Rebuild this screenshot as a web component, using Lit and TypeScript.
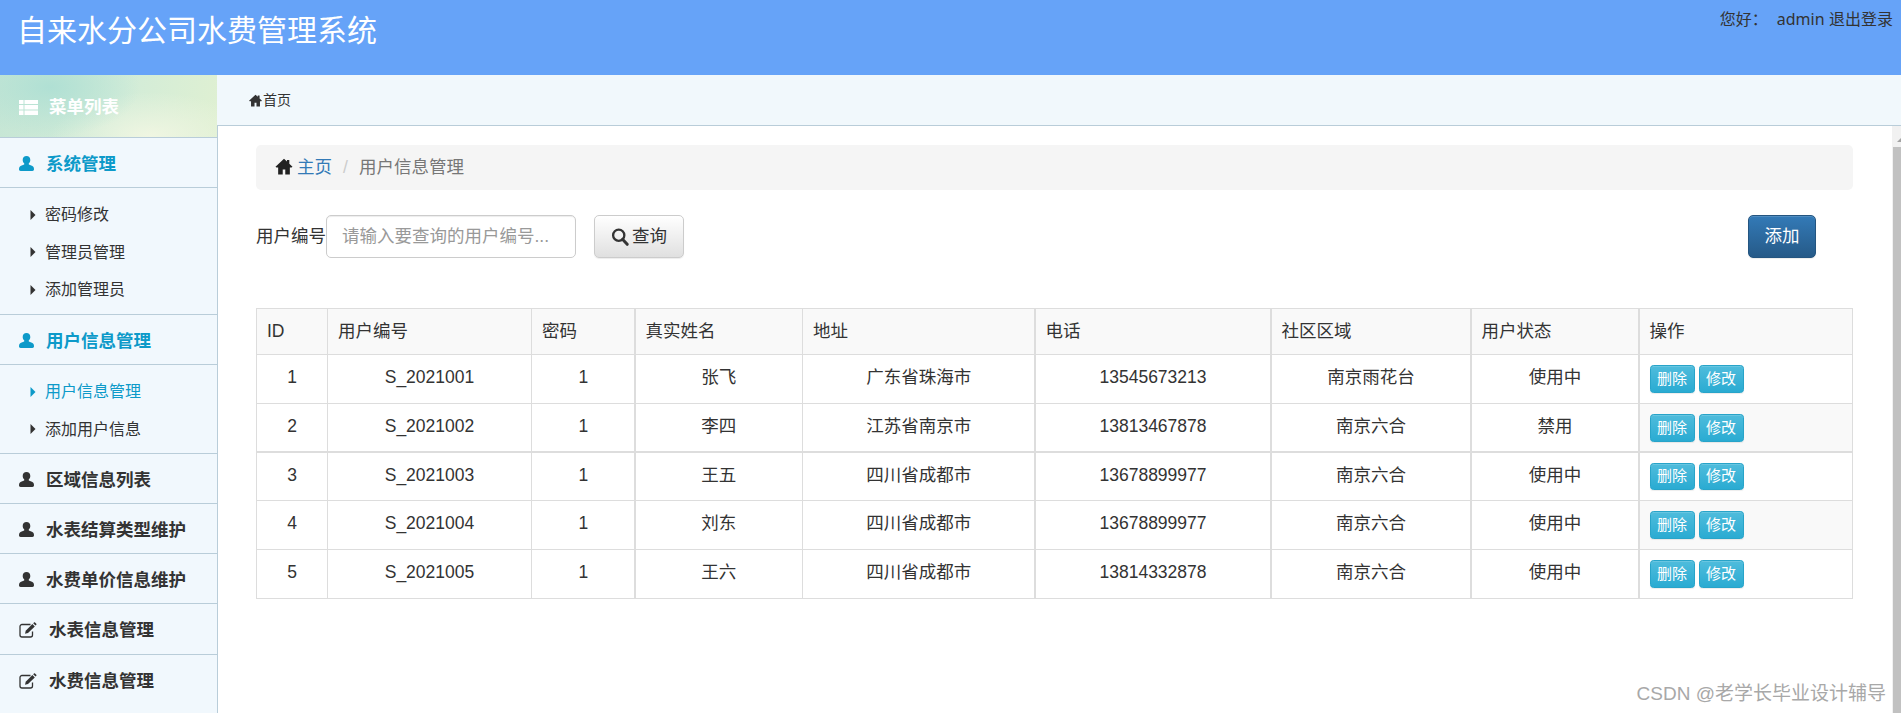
import { LitElement, html, css, svg } from 'lit';
import { customElement } from 'lit/decorators.js';
import { classMap } from 'lit/directives/class-map.js';

interface UserRow {
  id: number;
  code: string;
  pwd: string;
  name: string;
  addr: string;
  phone: string;
  area: string;
  status: string;
}

const rows: UserRow[] = [
  { id: 1, code: 'S_2021001', pwd: '1', name: '张飞', addr: '广东省珠海市', phone: '13545673213', area: '南京雨花台', status: '使用中' },
  { id: 2, code: 'S_2021002', pwd: '1', name: '李四', addr: '江苏省南京市', phone: '13813467878', area: '南京六合', status: '禁用' },
  { id: 3, code: 'S_2021003', pwd: '1', name: '王五', addr: '四川省成都市', phone: '13678899977', area: '南京六合', status: '使用中' },
  { id: 4, code: 'S_2021004', pwd: '1', name: '刘东', addr: '四川省成都市', phone: '13678899977', area: '南京六合', status: '使用中' },
  { id: 5, code: 'S_2021005', pwd: '1', name: '王六', addr: '四川省成都市', phone: '13814332878', area: '南京六合', status: '使用中' },
];

const heads = ['ID', '用户编号', '密码', '真实姓名', '地址', '电话', '社区区域', '用户状态', '操作'];

const userIcon = html`<svg class="ico-user" viewBox="0 0 15 15" fill="currentColor">${svg`<path d="M7.500 0C5.200 0 3.700 1.700 3.700 3.900c0 1.500.6 2.700 1.500 3.400v1.200C3.700 9.200 1.600 9.700.7 10.800.2 11.400 0 12.300 0 13.300 0 14.400.6 15 1.600 15h11.800c1 0 1.600-.6 1.600-1.700 0-1-.2-1.900-.7-2.500-.9-1.100-3-1.600-4.500-2.300V7.300c.9-.7 1.500-1.900 1.500-3.400C11.300 1.700 9.800 0 7.500 0z"/>`}</svg>`;

const editIcon = html`<svg class="ico-edit" viewBox="0 0 18 16">${svg`<path d="M11.500 2.500H3C1.900 2.500 1 3.400 1 4.500v8.500c0 1.100.9 2 2 2h8.500c1.100 0 2-.9 2-2V9.500" fill="none" stroke="currentColor" stroke-width="1.300"/><path d="M6 11.800l.7-3L13.400 2l2.400 2.400-6.800 6.700z" fill="currentColor"/><path d="M14.200 1.200l.8-.8c.3-.3.7-.3 1 0l1.300 1.300c.3.300.3.700 0 1l-.8.800z" fill="currentColor"/>`}</svg>`;

const caretIcon = html`<svg class="ico-caret" viewBox="0 0 6 10" fill="currentColor">${svg`<path d="M.5 0L5.500 5 .5 10z"/>`}</svg>`;

const homePath = svg`<path d="M8 .8L0 8.300l.9.7H2.500v6.500h4.300v-4.700h2.400v4.700h4.300V9h1.600l.9-.7-3-2.800V1.800h-2.200v1.600z"/>`;

@customElement('app-root')
export class AppRoot extends LitElement {
  static styles = css`
    * {
      margin: 0;
      padding: 0;
      box-sizing: border-box;
    }

    :host {
      display: block;
      position: relative;
      height: 713px;
      overflow: hidden;
      font-family: "Liberation Sans", "Noto Sans CJK SC", sans-serif;
      font-size: 17.5px;
      line-height: 25px;
      color: #333;
      background: #fff;
    }

    .top {
      height: 75px;
      background: #66a3f8;
      display: flex;
      justify-content: space-between;
      align-items: flex-start;
      padding: 0 8px 0 17px;
    }

    .top__title {
      font-size: 30px;
      line-height: 61px;
      color: #fff;
    }

    .top__user {
      font-size: 16px;
      line-height: 38px;
      color: #333;
      white-space: pre;
    }

    .top__user b {
      font-weight: normal;
      font-family: "Noto Sans", sans-serif;
    }

    .layout {
      display: flex;
      height: 638px;
    }

    .side {
      width: 217px;
      flex: none;
      background: #f1f8fd;
    }

    .side__title {
      height: 63px;
      border-bottom: 1px solid #b9cdd9;
      display: flex;
      align-items: center;
      gap: 11px;
      padding: 3px 0 0 19px;
      color: #fff;
      font-weight: bold;
      background:
        radial-gradient(ellipse 90px 50px at 50px 12px, #b0e0d4 0%, rgba(176, 224, 212, 0) 100%),
        radial-gradient(ellipse 100px 45px at 150px 62px, #f0f6e2 0%, rgba(240, 246, 226, 0) 100%),
        linear-gradient(100deg, #c6e6d5 0%, #d2ecd8 55%, #dff0d2 100%);
    }

    .ico-list {
      width: 19px;
      height: 15px;
      flex: none;
      margin-top: -1px;
    }

    .head {
      height: 50px;
      border-bottom: 1px solid #b9cdd9;
      display: flex;
      align-items: center;
      padding: 3px 0 0 19px;
      font-weight: bold;
      color: #333;
    }

    .head--on {
      color: #0d9ac9;
    }

    .head--edit {
      gap: 12px;
    }

    .head--tall {
      height: 51px;
    }

    .head--last {
      border-bottom: none;
    }

    .ico-user {
      width: 15px;
      height: 15px;
      margin: -1px 12px 0 0;
      flex: none;
    }

    .ico-edit {
      width: 18px;
      height: 16px;
      flex: none;
      margin-top: -2px;
    }

    .sub {
      list-style: none;
      padding: 8px 0 5.5px;
      border-bottom: 1px solid #b9cdd9;
      font-size: 16px;
    }

    .sub--two {
      padding-bottom: 5px;
    }

    .sub__item {
      height: 37.5px;
      display: flex;
      align-items: center;
      padding-left: 30px;
      gap: 10px;
    }

    .sub__item--on {
      color: #0d9ac9;
    }

    .ico-caret {
      width: 6px;
      height: 10px;
      flex: none;
    }

    .sub__item .ico-caret {
      margin-right: -1px;
    }

    .main {
      flex: 1;
      min-width: 0;
      display: flex;
      flex-direction: column;
    }

    .crumb-bar {
      height: 51px;
      flex: none;
      background: #f1f8fc;
      border-bottom: 1px solid #b9cdd9;
      display: flex;
      align-items: center;
      padding: 1px 0 0 32px;
      font-size: 14px;
      gap: 1px;
      color: #333;
    }

    .ico-home-s {
      width: 13px;
      height: 13px;
    }

    .body {
      flex: 1;
      min-height: 0;
      display: flex;
      border-left: 1px solid #b9cdd9;
    }

    .content {
      flex: 1;
      min-width: 0;
      padding: 19px 39px 0 38px;
    }

    .scroll {
      width: 9px;
      flex: none;
      background: #f1f1f1;
      padding: 21px 0 0 1px;
      position: relative;
    }

    .scroll__thumb {
      height: 100%;
      background: #c1c1c1;
    }

    .scroll__arrow {
      position: absolute;
      top: 12px;
      right: 0;
      width: 0;
      height: 0;
      border-left: 4px solid transparent;
      border-bottom: 4px solid #a3a3a3;
    }

    .path {
      height: 45px;
      background: #f5f5f5;
      border-radius: 5px;
      display: flex;
      align-items: center;
      padding-left: 19px;
      color: #777;
    }

    .path__home {
      width: 18px;
      height: 17px;
      color: #222;
      margin: -2px 4px 0 0;
    }

    .path__link {
      color: #337ab7;
    }

    .path__sep {
      color: #ccc;
      margin: 0 11px 0 11px;
      width: 5px;
    }

    .tools {
      margin-top: 25px;
      height: 43px;
      display: flex;
      align-items: center;
      padding-right: 37px;
    }

    .field {
      width: 250px;
      height: 43px;
      border: 1px solid #ccc;
      border-radius: 5px;
      padding: 0 15px;
      font: inherit;
      color: #555;
      background: #fff;
      box-shadow: inset 0 1px 1px rgba(0, 0, 0, 0.075);
      margin-right: 18px;
    }

    .field::placeholder {
      color: #999;
      opacity: 1;
    }

    .btn {
      height: 43px;
      border-radius: 5px;
      font: inherit;
      display: flex;
      align-items: center;
      justify-content: center;
      box-shadow: inset 0 1px 0 rgba(255, 255, 255, 0.15), 0 1px 1px rgba(0, 0, 0, 0.075);
    }

    .btn--search {
      width: 90px;
      gap: 3px;
      color: #333;
      border: 1px solid #ccc;
      background: linear-gradient(#fff, #e0e0e0);
    }

    .ico-search {
      width: 18px;
      height: 18px;
    }

    .btn--add {
      width: 68px;
      margin-left: auto;
      color: #fff;
      border: 1px solid #245580;
      background: linear-gradient(#337ab7, #265a88);
    }

    table {
      width: 1596px;
      margin-top: 50px;
      border-collapse: collapse;
      table-layout: fixed;
    }

    th,
    td {
      border: 1px solid #ddd;
      padding: 10px;
      vertical-align: top;
      font-weight: normal;
      text-align: center;
    }

    th {
      text-align: left;
      background: #f9f9f9;
      height: 46px;
    }

    td {
      height: 49px;
    }

    td.wide {
      padding-left: 11px;
    }

    .row--short td {
      height: 48px;
      border-bottom-width: 2px;
    }

    .wide {
      border-right-width: 2px;
    }

    td.ops {
      text-align: left;
      padding-top: 10px;
      padding-bottom: 0;
    }

    .row--even td.ops {
      background: #f9f9f9;
    }

    .ops__btns {
      display: flex;
      gap: 4px;
    }

    .mini {
      width: 45px;
      height: 27.5px;
      border: 1px solid #28a4c9;
      border-radius: 3.5px;
      font: inherit;
      font-size: 15px;
      line-height: 20px;
      color: #fff;
      background: linear-gradient(#4fbcdc, #2aabd2);
      box-shadow: inset 0 1px 0 rgba(255, 255, 255, 0.15), 0 1px 1px rgba(0, 0, 0, 0.075);
    }

    .mark {
      position: absolute;
      right: 15px;
      bottom: 5px;
      font-size: 19px;
      line-height: 28px;
      color: #a8a8a8;
      text-shadow: 1px 1px 1px rgba(255, 255, 255, 0.6);
    }
  `;

  renderRow(row: UserRow, i: number) {
    const cls = classMap({ 'row--even': i % 2 === 1, 'row--short': i === 1 });
    return html`
      <tr class=${cls}>
        <td>${row.id}</td>
        <td>${row.code}</td>
        <td class="wide">${row.pwd}</td>
        <td>${row.name}</td>
        <td class="wide">${row.addr}</td>
        <td class="wide">${row.phone}</td>
        <td class="wide">${row.area}</td>
        <td class="wide">${row.status}</td>
        <td class="ops">
          <div class="ops__btns">
            <button class="mini">删除</button>
            <button class="mini">修改</button>
          </div>
        </td>
      </tr>
    `;
  }

  renderSide() {
    return html`
      <aside class="side">
        <div class="side__title">
          <svg class="ico-list" viewBox="0 0 19 15" fill="currentColor">
            ${svg`<path d="M0 0h4.500v4H0zM5.500 0H19v4H5.500zM0 5h4.500v4.500H0zM5.500 5H19v4.500H5.500zM0 10.500h4.500V15H0zM5.500 10.500H19V15H5.500z"/>`}
          </svg>
          <span>菜单列表</span>
        </div>
        <div class="head head--on">${userIcon}系统管理</div>
        <ul class="sub">
          <li class="sub__item">${caretIcon}密码修改</li>
          <li class="sub__item">${caretIcon}管理员管理</li>
          <li class="sub__item">${caretIcon}添加管理员</li>
        </ul>
        <div class="head head--on">${userIcon}用户信息管理</div>
        <ul class="sub sub--two">
          <li class="sub__item sub__item--on">${caretIcon}用户信息管理</li>
          <li class="sub__item">${caretIcon}添加用户信息</li>
        </ul>
        <div class="head">${userIcon}区域信息列表</div>
        <div class="head">${userIcon}水表结算类型维护</div>
        <div class="head">${userIcon}水费单价信息维护</div>
        <div class="head head--edit head--tall">${editIcon}水表信息管理</div>
        <div class="head head--edit head--last">${editIcon}水费信息管理</div>
      </aside>
    `;
  }

  render() {
    return html`
      <header class="top">
        <div class="top__title">自来水分公司水费管理系统</div>
        <div class="top__user">您好：  <b>admin</b> 退出登录</div>
      </header>
      <div class="layout">
        ${this.renderSide()}
        <div class="main">
          <div class="crumb-bar">
            <svg class="ico-home-s" viewBox="0 0 16 16" fill="currentColor">${homePath}</svg>
            <span>首页</span>
          </div>
          <div class="body">
            <div class="content">
              <nav class="path">
                <svg class="path__home" viewBox="0 0 16 16" fill="currentColor">${homePath}</svg>
                <span class="path__link">主页</span>
                <span class="path__sep">/</span>
                <span>用户信息管理</span>
              </nav>
              <div class="tools">
                <label>用户编号</label>
                <input class="field" placeholder="请输入要查询的用户编号..." />
                <button class="btn btn--search">
                  <svg class="ico-search" viewBox="0 0 16 17">
                    ${svg`<circle cx="6.800" cy="6.800" r="5.300" fill="none" stroke="currentColor" stroke-width="2.200"/><path d="M10.600 10.800l4.200 4.600" stroke="currentColor" stroke-width="2.800" stroke-linecap="round"/>`}
                  </svg>
                  查询
                </button>
                <button class="btn btn--add">添加</button>
              </div>
              <table>
                <colgroup>
                  <col style="width:71px" /><col style="width:204px" /><col style="width:103px" />
                  <col style="width:168px" /><col style="width:232px" /><col style="width:236px" />
                  <col style="width:200px" /><col style="width:168px" /><col style="width:214px" />
                </colgroup>
                <thead>
                  <tr>
                    ${heads.map((h, i) => html`<th class=${i >= 2 && i !== 3 && i !== 8 ? 'wide' : ''}>${h}</th>`)}
                  </tr>
                </thead>
                <tbody>${rows.map((r, i) => this.renderRow(r, i))}</tbody>
              </table>
            </div>
            <div class="scroll">
              <div class="scroll__arrow"></div>
              <div class="scroll__thumb"></div>
            </div>
          </div>
        </div>
      </div>
      <div class="mark">CSDN @老学长毕业设计辅导</div>
    `;
  }
}
